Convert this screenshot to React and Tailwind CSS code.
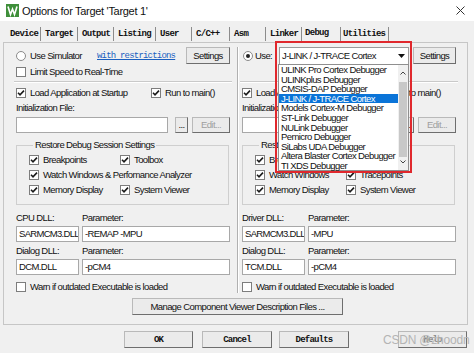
import React from 'react'

/**
 * Keil "Options for Target" dialog, Debug tab, with the debugger combo opened.
 */

function Check({ checked }) {
  return (
    <span className="w-[10px] h-[10px] shrink-0 border border-[#7d7d7d] bg-white flex items-center justify-center">
      {checked && (
        <svg width="8" height="8" viewBox="0 0 8 8">
          <path d="M1 3.8 L3 5.8 L7 1.6" fill="none" stroke="#1a1a1a" strokeWidth="1.6" />
        </svg>
      )}
    </span>
  )
}

function Radio({ checked }) {
  return (
    <span className="w-[10px] h-[10px] shrink-0 rounded-full border border-[#8a8a8a] bg-white flex items-center justify-center">
      {checked && <span className="w-[4px] h-[4px] rounded-full bg-[#222]" />}
    </span>
  )
}

function CheckRow({ checked, label, className = '' }) {
  return (
    <div className={`flex items-center h-[12px] ${className}`}>
      <Check checked={checked} />
      <span className="ml-[4px] whitespace-nowrap">{label}</span>
    </div>
  )
}

function Btn({ children, className = '' }) {
  return (
    <div className={`flex items-center justify-center whitespace-nowrap bg-[#ebebeb] border border-[#b9b9b9] border-r-[#6e6e6e] border-b-[#6e6e6e] ${className}`}>
      {children}
    </div>
  )
}

function Field({ children, className = '' }) {
  return (
    <div className={`h-[16px] bg-white border border-[#a8a8a8] flex items-center px-[2px] whitespace-nowrap overflow-hidden ${className}`}>
      {children}
    </div>
  )
}

function Column({ right }) {
  return (
    <div className="flex flex-col w-[214px]">
      {/* Use simulator / Use debugger */}
      {right ? (
        <div className="flex items-center h-[17px]">
          <span className="ml-[1px]"><Radio checked /></span>
          <span className="ml-[2px] w-[24px]">Use:</span>
          <div className="w-[130px] h-[18px] bg-white border border-[#9a9a9a] flex items-center pl-[2px] whitespace-nowrap overflow-hidden">
            <span className="flex-1">J-LINK / J-TRACE Cortex</span>
            <span className="w-[13px] h-full flex items-center justify-center">
              <svg width="7" height="4" viewBox="0 0 7 4"><path d="M0 0 H7 L3.5 4 Z" fill="#111" /></svg>
            </span>
          </div>
          <Btn className="ml-auto w-[43px] h-[17px]">Settings</Btn>
        </div>
      ) : (
        <div className="flex items-center h-[17px]">
          <Radio />
          <span className="ml-[4px] w-[67px]">Use Simulator</span>
          <span className="font-['Liberation_Mono',monospace] text-[9px] tracking-[-0.8px] text-[#1a5fc0] underline">with restrictions</span>
          <Btn className="ml-auto w-[44px] h-[17px]">Settings</Btn>
        </div>
      )}
      {right ? <div className="h-[12px] mt-[2px]" /> : <CheckRow className="mt-[2px]" label="Limit Speed to Real-Time" />}

      <div className="mt-[3px] -mx-[2px] border-t border-[#c9c9c9] border-b border-b-white" />

      <div className="flex items-center mt-[4px]">
        <CheckRow checked label="Load Application at Startup" className="w-[135px]" />
        <CheckRow checked label="Run to main()" />
      </div>
      <div className="h-[12px] mt-[3px] flex items-center">Initialization File:</div>
      <div className="flex items-center mt-[3px]">
        <Field className="w-[152px]" />
        <Btn className="ml-[7px] w-[13px] h-[16px] items-end pb-[3px] leading-none">...</Btn>
        <Btn className="ml-auto w-[38px] h-[16px] text-[#9f9f9f]">Edit...</Btn>
      </div>

      <fieldset className="mt-[6px] w-[213px] border border-[#cfcfcf] pl-[12px] pb-[8px]">
        <legend className="ml-[4px] px-[2px] h-[12px] leading-[12px]">Restore Debug Session Settings</legend>
        <div className="flex mt-[3px]">
          <CheckRow checked label="Breakpoints" className="w-[91px]" />
          <CheckRow checked label="Toolbox" />
        </div>
        {right ? (
          <div className="flex mt-[3px]">
            <CheckRow checked label="Watch Windows" className="w-[91px]" />
            <CheckRow checked label="Tracepoints" />
          </div>
        ) : (
          <CheckRow checked label="Watch Windows & Perfomance Analyzer" className="mt-[3px]" />
        )}
        <div className="flex mt-[3px]">
          <CheckRow checked label="Memory Display" className="w-[91px]" />
          <CheckRow checked label="System Viewer" />
        </div>
      </fieldset>

      <div className="flex h-[12px] mt-[7px] items-center">
        <span className="w-[66px]">{right ? 'Driver DLL:' : 'CPU DLL:'}</span>
        <span>Parameter:</span>
      </div>
      <div className="flex mt-[2px] gap-[3px]">
        <Field className="w-[63px] px-[1px] tracking-[-0.7px]">SARMCM3.DLL</Field>
        <Field className="flex-1">{right ? '-MPU' : '-REMAP -MPU'}</Field>
      </div>
      <div className="flex h-[12px] mt-[3px] items-center">
        <span className="w-[66px]">Dialog DLL:</span>
        <span>Parameter:</span>
      </div>
      <div className="flex mt-[2px] gap-[3px]">
        <Field className="w-[63px] px-[1px]">{right ? 'TCM.DLL' : 'DCM.DLL'}</Field>
        <Field className="flex-1">-pCM4</Field>
      </div>
      <CheckRow label="Warn if outdated Executable is loaded" className="mt-[6px]" />
    </div>
  )
}

const tabs = [
  ['Device', 'w-[35px]'],
  ['Target', 'w-[37px]'],
  ['Output', 'w-[36px]'],
  ['Listing', 'w-[42px]'],
  ['User', 'w-[36px]'],
  ['C/C++', 'w-[38px]'],
  ['Asm', 'w-[36px]'],
  ['Linker', 'w-[36px]'],
]

const debuggers = [
  'ULINK Pro Cortex Debugger',
  'ULINKplus Debugger',
  'CMSIS-DAP Debugger',
  'J-LINK / J-TRACE Cortex',
  'Models Cortex-M Debugger',
  'ST-Link Debugger',
  'NULink Debugger',
  'Pemicro Debugger',
  'SiLabs UDA Debugger',
  'Altera Blaster Cortex Debugger',
  'TI XDS Debugger',
]

export default function App() {
  return (
    <div className="relative w-[474px] h-[353px] overflow-hidden bg-[#f0f0f0] text-[9.5px] leading-[12px] tracking-[-0.6px] text-[#111] font-['Liberation_Sans',Arial,sans-serif]">
      {/* Title bar */}
      <div className="h-[21px] bg-white flex items-center">
        <svg className="ml-[6px]" width="13" height="13" viewBox="0 0 13 13">
          <rect width="13" height="13" fill="#3f8f3a" />
          <path d="M2 2.5 L4.5 10.5 L6.5 5 L8.5 10.5 L11 2.5" fill="none" stroke="#fff" strokeWidth="1.6" />
        </svg>
        <span className="ml-[3px] text-[11px] tracking-[-0.3px]">Options for Target 'Target 1'</span>
        <svg className="ml-auto mr-[9px]" width="9" height="9" viewBox="0 0 9 9">
          <path d="M0.5 0.5 L8.5 8.5 M8.5 0.5 L0.5 8.5" stroke="#333" strokeWidth="1" />
        </svg>
      </div>

      {/* Tabs */}
      <div className="h-[21px] flex items-end pl-[6px] font-['Liberation_Mono',monospace] font-bold text-[9px] tracking-[-0.7px]">
        {tabs.map(([t, w]) => (
          <div key={t} className={`${w} h-[14px] border-r border-[#8c8c8c] flex items-center pl-[4px] mb-[1px]`}>{t}</div>
        ))}
        <div className="w-[38px] h-[17px] flex items-start pt-[2px] pl-[3px]">Debug</div>
        <div className="w-[49px] h-[14px] border-l border-r border-[#8c8c8c] flex items-center pl-[2px] mb-[1px]">Utilities</div>
      </div>

      {/* Tab panel */}
      <div className="ml-[3px] w-[465px] h-[283px] border border-[#c6c6c6] flex flex-col">
        <div className="flex h-[250px] pt-[4px]">
          <div className="w-[233px] pl-[12px]">
            <Column />
          </div>
          <div className="w-px h-[246px] bg-[#b0b0b0]" />
          <div className="w-px h-[246px] bg-white" />
          <div className="pl-[3px]">
            <Column right />
          </div>
        </div>
        <Btn className="mt-[5px] ml-[128px] w-[211px] h-[17px]">Manage Component Viewer Description Files ...</Btn>
      </div>

      {/* Dialog buttons */}
      <div className="flex mt-[6px] font-['Liberation_Mono',monospace] font-bold text-[9px] tracking-[-0.8px]">
        <Btn className="ml-[124px] w-[69px] h-[17px]">OK</Btn>
        <Btn className="ml-[9px] w-[70px] h-[17px]">Cancel</Btn>
        <Btn className="ml-[7px] w-[70px] h-[17px]">Defaults</Btn>
        <Btn className="ml-[49px] w-[69px] h-[17px] text-[#8a8a8a]">Help</Btn>
      </div>

      {/* Opened debugger list */}
      <div className="absolute left-[278px] top-[64px] w-[131px] h-[107px] bg-white border border-[#8f8f8f] flex">
        <div className="flex-1 flex flex-col">
          {debuggers.map((d, i) => (
            <div
              key={d}
              className={`h-[9.6px] leading-[9.6px] pl-[2px] whitespace-nowrap ${i === 3 ? 'bg-[#0a74d8] text-white' : ''}`}
            >
              {d}
            </div>
          ))}
        </div>
        <div className="w-[10px] bg-[#f0f0f0] flex flex-col items-center">
          <svg className="mt-[6px]" width="6" height="4" viewBox="0 0 6 4"><path d="M0.5 3.5 L3 1 L5.5 3.5" fill="none" stroke="#444" strokeWidth="1" /></svg>
          <div className="mt-[7px] w-[8px] h-[75px] bg-[#c8c8c8]" />
          <svg className="mt-[3px]" width="6" height="4" viewBox="0 0 6 4"><path d="M0.5 0.5 L3 3 L5.5 0.5" fill="none" stroke="#444" strokeWidth="1" /></svg>
        </div>
      </div>

      {/* Red annotation frame */}
      <div className="absolute left-[275px] top-[41px] w-[137px] h-[132px] border-2 border-[#e0282d] pointer-events-none" />

      {/* Watermark */}
      <div className="absolute left-[383px] top-[333px] text-[12px] leading-[14px] text-[#b4b4b4] font-['Liberation_Sans',Arial,sans-serif] tracking-[-0.2px]">
        CSDN @zhoodn
      </div>
    </div>
  )
}
